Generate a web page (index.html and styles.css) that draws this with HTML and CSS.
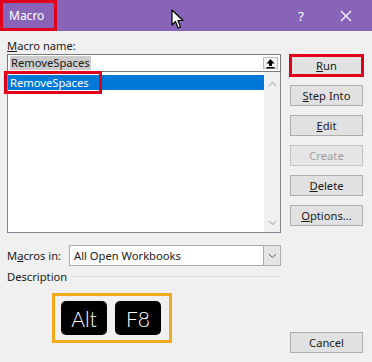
FILE: index.html
```html
<!DOCTYPE html>
<html lang="en">
<head>
    <meta charset="UTF-8">
    <title>Macro</title>
    <link rel="stylesheet" href="styles.css">
</head>
<body>
    <div class="dialog">
        <div class="titlebar">
            <span class="title">Macro<span class="mark"></span></span>
            <svg class="cursor" width="14" height="21" viewBox="0 0 14 21">
                <path d="M1 1 L1 16 L4.5 12.5 L7 19 L9.5 18 L7 11.5 L12 11.5 Z" fill="#fff" stroke="#000" stroke-width="1.2" stroke-linejoin="round"/>
            </svg>
            <span class="help">?</span>
            <span class="close">
                <svg width="12" height="12" viewBox="0 0 12 12"><path d="M1 1 L11 11 M11 1 L1 11" stroke="#fff" stroke-width="1.3"/></svg>
            </span>
        </div>
        <div class="body">
            <div class="left">
                <div class="label"><u>M</u>acro name:</div>
                <div class="name-input">
                    <span class="sel-text">RemoveSpaces</span>
                    <span class="pick">
                        <svg width="11" height="11" viewBox="0 0 11 11"><path d="M5.5 1 L1.5 5.5 L4 5.5 L4 8 L7 8 L7 5.5 L9.5 5.5 Z" fill="#000"/><rect x="1.5" y="9" width="8" height="1.5" fill="#000"/></svg>
                    </span>
                </div>
                <div class="list">
                    <div class="items">
                        <div class="item active">RemoveSpaces<span class="mark"></span></div>
                    </div>
                    <div class="scroll">
                        <svg width="9" height="6" viewBox="0 0 9 6"><path d="M1 5 L4.5 1.5 L8 5" fill="none" stroke="#c2c2c2" stroke-width="1.3"/></svg>
                        <svg width="9" height="6" viewBox="0 0 9 6"><path d="M1 1 L4.5 4.5 L8 1" fill="none" stroke="#c2c2c2" stroke-width="1.3"/></svg>
                    </div>
                </div>
                <div class="macros-in">
                    <span class="label">M<u>a</u>cros in:</span>
                    <div class="select">
                        <span>All Open Workbooks</span>
                        <span class="drop">
                            <svg width="9" height="6" viewBox="0 0 9 6"><path d="M1 1 L4.5 4.5 L8 1" fill="none" stroke="#555" stroke-width="1"/></svg>
                        </span>
                    </div>
                </div>
                <div class="desc">
                    <span class="label">Description</span>
                    <span class="rule"></span>
                </div>
                <div class="keys">
                    <span class="key">Alt</span>
                    <span class="key">F8</span>
                </div>
            </div>
            <div class="buttons">
                <button class="default"><u>R</u>un<span class="mark"></span></button>
                <button><u>S</u>tep Into</button>
                <button><u>E</u>dit</button>
                <button class="disabled">Create</button>
                <button><u>D</u>elete</button>
                <button><u>O</u>ptions...</button>
                <button class="cancel">Cancel</button>
            </div>
        </div>
    </div>
</body>
</html>
```

FILE: styles.css
```css
body {
    margin: 0;
    font-family: "Noto Sans", sans-serif;
    font-size: 11.2px;
    color: #1a1a1a;
    background-color: #f0f0f0;
}
.dialog {
    width: 372px;
    height: 362px;
    overflow: hidden;
    background-color: #f0f0f0;
}
.titlebar {
    height: 31px;
    background-color: #8764b8;
    color: #fff;
    display: flex;
    align-items: center;
    position: relative;
}
.title {
    position: relative;
    height: 31px;
    width: 57px;
    box-sizing: border-box;
    padding-left: 9px;
    display: flex;
    align-items: center;
    font-size: 12px;
}
.mark {
    position: absolute;
    inset: 0;
    border: 3px solid #e0001b;
}
.cursor {
    position: absolute;
    left: 171px;
    top: 9px;
}
.help {
    margin-left: auto;
    margin-right: 36px;
    font-size: 13px;
}
.close {
    width: 14px;
    margin-right: 18px;
    display: flex;
}
.body {
    display: flex;
    padding: 0 9px 0 7px;
}
.left {
    width: 274px;
}
.left > .label {
    height: 16px;
    line-height: 16px;
    margin-top: 7px;
}
.name-input {
    height: 18px;
    background-color: #fff;
    border: 1px solid #7a7a7a;
    box-sizing: border-box;
    display: flex;
    align-items: center;
    padding: 0 2px;
}
.sel-text {
    background-color: #cccccc;
    line-height: 14px;
    padding: 0 1px;
}
.pick {
    margin-left: auto;
    width: 15px;
    height: 12px;
    box-sizing: border-box;
    border: 1px solid #b8b8b8;
    background-color: #f5f5f5;
    display: flex;
    align-items: center;
    justify-content: center;
}
.list {
    height: 161px;
    box-sizing: border-box;
    border: 1px solid #828790;
    border-top: none;
    background-color: #fff;
    display: flex;
}
.items {
    flex: 1;
    padding-top: 3px;
}
.item {
    height: 15px;
    line-height: 15px;
    padding-left: 2px;
}
.item.active {
    position: relative;
    background-color: #0078d7;
    color: #fff;
}
.item .mark {
    inset: -4px auto -4px -4px;
    width: 92px;
}
.scroll {
    width: 16px;
    background-color: #f0f0f0;
    display: flex;
    flex-direction: column;
    justify-content: space-between;
    align-items: center;
    padding: 9px 0 6px;
}
.macros-in {
    display: flex;
    align-items: center;
    margin-top: 12px;
}
.macros-in .label {
    width: 62px;
}
.select {
    flex: 1;
    height: 21px;
    box-sizing: border-box;
    border: 1px solid #acacac;
    background-color: #fff;
    display: flex;
    align-items: center;
    padding-left: 4px;
}
.drop {
    margin-left: auto;
    width: 16px;
    height: 19px;
    background-color: #e5e5e5;
    border-left: 1px solid #acacac;
    display: flex;
    align-items: center;
    justify-content: center;
}
.desc {
    display: flex;
    align-items: center;
    height: 16px;
    margin-top: 2px;
}
.rule {
    flex: 1;
    height: 1px;
    background-color: #dcdcdc;
    margin-left: 4px;
}
.keys {
    margin: 9px 0 0 45px;
    width: 120px;
    height: 50px;
    box-sizing: border-box;
    border: 3px solid #f1a91d;
    display: flex;
    align-items: center;
    gap: 8px;
    padding-left: 6px;
}
.key {
    width: 46px;
    height: 34px;
    background-color: #000;
    border-radius: 5px;
    color: #fff;
    font-family: Lato, sans-serif;
    font-weight: 300;
    font-size: 21px;
    display: flex;
    align-items: center;
    justify-content: center;
}
.buttons {
    margin-left: 9px;
    width: 73px;
    display: flex;
    flex-direction: column;
    gap: 9px;
    padding-top: 24px;
}
button {
    position: relative;
    height: 21px;
    padding: 0;
    font-family: "Noto Sans", sans-serif;
    font-size: 11.2px;
    color: #1a1a1a;
    background-color: #e1e1e1;
    border: 1px solid #adadad;
}
button.default {
    border-color: #0078d7;
}
button .mark {
    inset: -2px;
}
button.disabled {
    color: #a0a0a0;
    background-color: #e6e6e6;
    border-color: #c3c3c3;
}
button.cancel {
    margin-top: 97px;
}
```
